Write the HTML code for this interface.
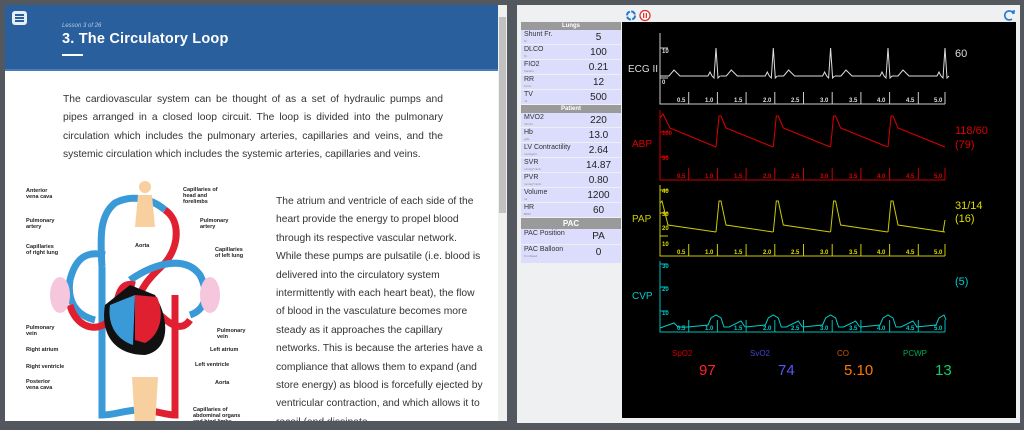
<!DOCTYPE html>
<html><head><meta charset="utf-8"><style>
*{margin:0;padding:0;box-sizing:border-box}
body{width:1024px;height:430px;background:#53575e;position:relative;overflow:hidden;font-family:"Liberation Sans",sans-serif}
#left{position:absolute;left:5px;top:5px;width:502px;height:416px;background:#fff;overflow:hidden}
#hdr{position:absolute;left:0;top:0;width:493px;height:66px;background:#2a5f9e;border-bottom:2px solid #4a7cbb}
#menu{position:absolute;left:7px;top:6px;width:15px;height:14px;background:#e8eef6;border-radius:3px}
#menu i{position:absolute;left:3px;width:9px;height:2px;background:#2a5f9e}
#sb{position:absolute;left:493px;top:0;width:9px;height:416px;background:#f0f0f0}
#thumb{position:absolute;left:1px;top:12px;width:7px;height:196px;background:#c1c1c1}
.p1{position:absolute;left:58px;top:86px;width:380px;font-size:10.3px;line-height:18.4px;color:#333;text-align:justify}
.p2{position:absolute;left:271px;top:188px;width:208px;font-size:10.3px;line-height:18.4px;color:#333}
#right{position:absolute;left:517px;top:5px;width:503px;height:418px;background:#eef0f2}
#tbl{position:absolute;left:4px;top:17px;width:100px}
.h{background:#9a9a9a;color:#fff;font-size:6px;text-align:center;height:8px;line-height:8px;font-weight:bold}
.h2{height:11px;line-height:11px;font-size:8px}
.r{background:#dcdcfc;height:15px;position:relative;border-bottom:1px solid #eef0f2;font-size:7px;color:#333}
.r b{position:absolute;left:3px;top:1px;font-weight:normal;font-size:7px}
.r s{position:absolute;left:3px;top:9px;font-size:3px;color:#888;text-decoration:none}
.r em{position:absolute;left:60px;width:35px;text-align:center;top:2px;font-style:normal;font-size:10px;color:#222}
</style></head><body>
<div id="left">
<div id="hdr">
<div id="menu"><i style="top:3px"></i><i style="top:6px"></i><i style="top:9px"></i></div>
<div style="position:absolute;left:57px;top:18px;color:#b8c9e2;font-size:6px;font-style:italic">Lesson 3 of 26</div>
<div style="position:absolute;left:57px;top:26px;color:#fff;font-size:14.5px;font-weight:bold;letter-spacing:0.2px">3. The Circulatory Loop</div>
<div style="position:absolute;left:57px;top:49px;width:21px;height:2px;background:#fff"></div>
</div>
<div class="p1">The cardiovascular system can be thought of as a set of hydraulic pumps and pipes arranged in a closed loop circuit. The loop is divided into the pulmonary circulation which includes the pulmonary arteries, capillaries and veins, and the systemic circulation which includes the systemic arteries, capillaries and veins.</div>
<svg style="position:absolute;left:0;top:172px" width="260" height="250" viewBox="0 172 260 250">
<g fill="none" stroke-width="7">
<path d="M97,262 C95,230 95,210 110,198 C125,190 145,192 160,205" stroke="#3a9ad8"/>
<path d="M160,205 C175,215 175,240 160,258 C150,268 135,280 132,300" stroke="#e02030"/>
<path d="M97,262 L97,410 C110,410 120,405 135,405" stroke="#3a9ad8"/>
<path d="M170,290 L170,410 C160,410 150,405 135,405" stroke="#e02030"/>
<path d="M100,250 C80,245 70,255 65,275 C62,295 70,310 90,315" stroke="#3a9ad8"/>
<path d="M125,275 C150,258 180,250 195,270 C205,290 200,305 185,310" stroke="#3a9ad8"/>
<path d="M65,300 C70,320 90,330 105,315 C115,300 110,275 130,280" stroke="#e02030"/>
<path d="M185,315 C175,330 160,315 150,305" stroke="#e02030"/>
</g>
<ellipse cx="55" cy="290" rx="10" ry="18" fill="#f5c6dc"/>
<ellipse cx="205" cy="290" rx="10" ry="18" fill="#f5c6dc"/>
<path d="M100,300 C95,330 110,350 140,350 C165,345 165,315 150,290 L125,280 Z" fill="#111"/>
<path d="M105,300 L130,290 L128,340 C112,335 102,320 105,300Z" fill="#3a9ad8"/>
<path d="M130,290 L152,292 C160,310 155,330 140,338 L130,335Z" fill="#e02030"/>
<circle cx="140" cy="182" r="6" fill="#f8d0a0"/>
<path d="M133,190 L147,190 L150,222 L130,222Z M127,372 L153,372 L150,422 L130,422Z" fill="#f8d0a0"/>
<g font-size="5.5" font-weight="bold" fill="#222">
<text x="21" y="187">Anterior</text><text x="21" y="193">vena cava</text>
<text x="178" y="186">Capillaries of</text><text x="178" y="192">head and</text><text x="178" y="198">forelimbs</text>
<text x="21" y="217">Pulmonary</text><text x="21" y="223">artery</text>
<text x="195" y="217">Pulmonary</text><text x="195" y="223">artery</text>
<text x="21" y="243">Capillaries</text><text x="21" y="249">of right lung</text>
<text x="210" y="246">Capillaries</text><text x="210" y="252">of left lung</text>
<text x="130" y="242">Aorta</text>
<text x="21" y="324">Pulmonary</text><text x="21" y="330">vein</text>
<text x="212" y="327">Pulmonary</text><text x="212" y="333">vein</text>
<text x="21" y="346">Right atrium</text><text x="205" y="346">Left atrium</text>
<text x="21" y="363">Right ventricle</text><text x="190" y="361">Left ventricle</text>
<text x="21" y="378">Posterior</text><text x="21" y="384">vena cava</text><text x="210" y="379">Aorta</text>
<text x="188" y="406">Capillaries of</text><text x="188" y="412">abdominal organs</text><text x="188" y="418">and hind limbs</text>
</g></svg>
<div class="p2">The atrium and ventricle of each side of the heart provide the energy to propel blood through its respective vascular network. While these pumps are pulsatile (i.e. blood is delivered into the circulatory system intermittently with each heart beat), the flow of blood in the vasculature becomes more steady as it approaches the capillary networks. This is because the arteries have a compliance that allows them to expand (and store energy) as blood is forcefully ejected by ventricular contraction, and which allows it to recoil (and dissipate</div>
<div id="sb"><div id="thumb"></div></div>
</div>
<div id="right">
<svg style="position:absolute;left:108px;top:4px" width="28" height="13"><circle cx="6" cy="6.5" r="4" fill="none" stroke="#1e7ad0" stroke-width="2" stroke-dasharray="5 1.3"/><circle cx="20" cy="6.5" r="5" fill="#fff" stroke="#e03030" stroke-width="1.3"/><rect x="18" y="4" width="1.3" height="5" fill="#e03030"/><rect x="20.7" y="4" width="1.3" height="5" fill="#e03030"/></svg>
<svg style="position:absolute;left:486px;top:4px" width="13" height="13"><path d="M10.5,5 A4.5,4.5 0 1 0 9,10" fill="none" stroke="#1e7ad0" stroke-width="1.6"/><path d="M8,2 L11.5,5 L12,1Z" fill="#1e7ad0"/></svg>
<div id="tbl">
<div class="h">Lungs</div>
<div class="r"><b>Shunt Fr.</b><s>%</s><em>5</em></div>
<div class="r"><b>DLCO</b><s>%</s><em>100</em></div>
<div class="r"><b>FIO2</b><s>fraction</s><em>0.21</em></div>
<div class="r"><b>RR</b><s>1/min</s><em>12</em></div>
<div class="r"><b>TV</b><s>ml</s><em>500</em></div>
<div class="h">Patient</div>
<div class="r"><b>MVO2</b><s>ml/min</s><em>220</em></div>
<div class="r"><b>Hb</b><s>g/dL</s><em>13.0</em></div>
<div class="r"><b>LV Contractility</b><s>mmHg/ml</s><em>2.64</em></div>
<div class="r"><b>SVR</b><s>mmHg*min/L</s><em>14.87</em></div>
<div class="r"><b>PVR</b><s>mmHg*min/L</s><em>0.80</em></div>
<div class="r"><b>Volume</b><s>ml</s><em>1200</em></div>
<div class="r"><b>HR</b><s>BPM</s><em>60</em></div>
<div class="h h2">PAC</div>
<div class="r" style="height:16px"><b>PAC Position</b><em>PA</em></div>
<div class="r" style="height:19px"><b>PAC Balloon</b><s>% inflated</s><em>0</em></div>
</div>
</div>
<svg style="position:absolute;left:622px;top:22px" width="394" height="396" viewBox="622 22 394 396">
<rect x="622" y="22" width="394" height="396" fill="#000"/>
<defs>
<g id="ticks"><path d="M688.7,92V104M717.4,92V104M746.1,92V104M774.8,92V104M803.5,92V104M832.2,92V104M860.9,92V104M889.6,92V104M918.3,92V104M945,92V104"/></g>
<path id="eb" d="M663,76 L669,76 L674,70 L680,76 L708,76 L710,72 L712,76 L714,78 L716,48 L718,78 L720,76"/>
<path id="ab" d="M716,147 L719,116 L721,116 L726,128 L773,147"/>
<path id="pb" d="M716,232 L719,201 L721,201 L726,225 L773,232"/>
<path id="cb" d="M688,327 L708,325 L711,318 L716,315 L721,318 L724,327 L729,327 L741,321 L745,327"/>
</defs>
<g font-size="6" font-weight="bold">
<g stroke="#ccc" fill="none"><path d="M660,33V104H945"/><path d="M660,48h8M660,78h8"/><use href="#ticks"/></g>
<g fill="#ddd"><text x="662" y="53">10</text><text x="662" y="84">0</text>
<text x="677" y="102">0.5</text><text x="705" y="102">1.0</text><text x="734" y="102">1.5</text><text x="763" y="102">2.0</text><text x="791" y="102">2.5</text><text x="820" y="102">3.0</text><text x="849" y="102">3.5</text><text x="877" y="102">4.0</text><text x="906" y="102">4.5</text><text x="934" y="102">5.0</text></g>
<g stroke="#c00" fill="none"><path d="M660,110V180H945"/><path d="M660,132h8M660,157h8"/><g transform="translate(0,76)"><use href="#ticks"/></g></g>
<g fill="#d00"><text x="662" y="135">100</text><text x="662" y="160">50</text>
<text x="677" y="178">0.5</text><text x="705" y="178">1.0</text><text x="734" y="178">1.5</text><text x="763" y="178">2.0</text><text x="791" y="178">2.5</text><text x="820" y="178">3.0</text><text x="849" y="178">3.5</text><text x="877" y="178">4.0</text><text x="906" y="178">4.5</text><text x="934" y="178">5.0</text></g>
<g stroke="#cc0" fill="none"><path d="M660,185V256H945"/><path d="M660,190h8M660,213h8M660,236h8"/><g transform="translate(0,152)"><use href="#ticks"/></g></g>
<g fill="#dd0"><text x="662" y="193">40</text><text x="662" y="216">30</text><text x="662" y="230">20</text><text x="662" y="246">10</text>
<text x="677" y="254">0.5</text><text x="705" y="254">1.0</text><text x="734" y="254">1.5</text><text x="763" y="254">2.0</text><text x="791" y="254">2.5</text><text x="820" y="254">3.0</text><text x="849" y="254">3.5</text><text x="877" y="254">4.0</text><text x="906" y="254">4.5</text><text x="934" y="254">5.0</text></g>
<g stroke="#0bb" fill="none"><path d="M660,261V332H945"/><path d="M660,264h8M660,287h8M660,311h8"/><g transform="translate(0,228)"><use href="#ticks"/></g></g>
<g fill="#0cc"><text x="662" y="268">30</text><text x="662" y="291">20</text><text x="662" y="315">10</text>
<text x="677" y="330">0.5</text><text x="705" y="330">1.0</text><text x="734" y="330">1.5</text><text x="763" y="330">2.0</text><text x="791" y="330">2.5</text><text x="820" y="330">3.0</text><text x="849" y="330">3.5</text><text x="877" y="330">4.0</text><text x="906" y="330">4.5</text><text x="934" y="330">5.0</text></g>
</g>
<g fill="none" stroke-width="1">
<g stroke="#ddd"><path d="M660,76 L663,76"/><use href="#eb"/><use href="#eb" x="57.3"/><use href="#eb" x="114.6"/><use href="#eb" x="172"/><use href="#eb" x="229"/></g>
<g stroke="#d00"><path d="M660,118 L663,114 L670,128 L716,147"/><use href="#ab"/><use href="#ab" x="57.3"/><use href="#ab" x="114.6"/><use href="#ab" x="172"/></g>
<g stroke="#cc0"><path d="M660,203 L662,201 L668,225 L716,232"/><use href="#pb"/><use href="#pb" x="57.3"/><use href="#pb" x="114.6"/><use href="#pb" x="172"/><path d="M943,232 L945,220"/></g>
<g stroke="#0cc"><path d="M660,328 L674,323 L678,327 L688,327"/><use href="#cb"/><use href="#cb" x="57.3"/><use href="#cb" x="114.6"/><use href="#cb" x="172"/><path d="M916,327 L936,325 L939,318 L944,315 L946,320"/></g>
</g>
<g font-size="10">
<text x="628" y="72" fill="#ddd">ECG II</text><text x="955" y="57" fill="#ddd" font-size="11">60</text>
<text x="632" y="147" fill="#d00">ABP</text><text x="955" y="134" fill="#d00" font-size="11">118/60</text><text x="955" y="148" fill="#d00" font-size="11">(79)</text>
<text x="632" y="222" fill="#cc0">PAP</text><text x="955" y="209" fill="#dd0" font-size="11">31/14</text><text x="955" y="222" fill="#dd0" font-size="11">(16)</text>
<text x="632" y="299" fill="#0cc">CVP</text><text x="955" y="285" fill="#0cc" font-size="11">(5)</text>
<text x="672" y="356" fill="#c00" font-size="8">SpO2</text><text x="699" y="375" fill="#f22" font-size="15">97</text>
<text x="750" y="356" fill="#44c" font-size="8">SvO2</text><text x="778" y="375" fill="#55f" font-size="15">74</text>
<text x="837" y="356" fill="#c50" font-size="8">CO</text><text x="844" y="375" fill="#f70" font-size="15">5.10</text>
<text x="903" y="356" fill="#0a5" font-size="8">PCWP</text><text x="935" y="375" fill="#1c6" font-size="15">13</text>
</g>
</svg>
</body></html>
